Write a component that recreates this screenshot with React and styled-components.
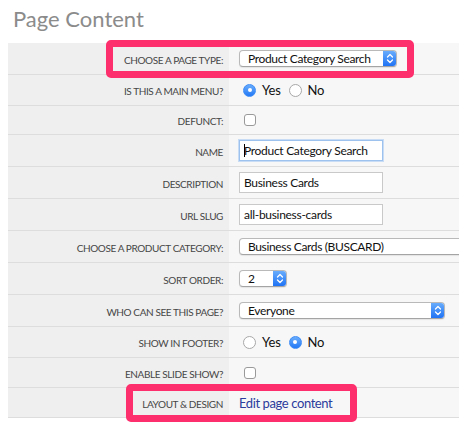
import styled, { createGlobalStyle } from "styled-components";

const GlobalStyle = createGlobalStyle`
  html, body {
    margin: 0;
    padding: 0;
    background: #ffffff;
    overflow: hidden;
  }
  body {
    font-family: Lato, "Open Sans", "Liberation Sans", sans-serif;
  }
`;

const rows = [
  { label: "Choose a page type:", h: 32, kind: "select", value: "Product Category Search", width: 158 },
  { label: "Is this a main menu?", h: 31, kind: "radio", checked: "yes" },
  { label: "Defunct:", h: 29, kind: "checkbox" },
  { label: "Name", h: 32, kind: "input", value: "Product Category Search", focused: true },
  { label: "Description", h: 32, kind: "input", value: "Business Cards" },
  { label: "URL slug", h: 32, kind: "input", value: "all-business-cards" },
  { label: "Choose a product category:", h: 32, kind: "select", value: "Business Cards (BUSCARD)", width: 280, noStepper: true },
  { label: "Sort order:", h: 32, kind: "select", value: "2", width: 48 },
  { label: "Who can see this page?", h: 32, kind: "select", value: "Everyone", width: 206 },
  { label: "Show in footer?", h: 31, kind: "radio", checked: "no" },
  { label: "Enable slide show?", h: 30, kind: "checkbox" },
  { label: "Layout & Design", h: 30, kind: "link", value: "Edit page content" },
];

function Stepper() {
  return (
    <Styled.Stepper>
      <svg width="8" height="11" viewBox="0 0 8 11" fill="none">
        <path d="M1.5 4 L4 1.5 L6.5 4" stroke="#fff" strokeWidth="1.3" strokeLinecap="round" strokeLinejoin="round" />
        <path d="M1.5 7 L4 9.5 L6.5 7" stroke="#fff" strokeWidth="1.3" strokeLinecap="round" strokeLinejoin="round" />
      </svg>
    </Styled.Stepper>
  );
}

function Control({ row }) {
  if (row.kind === "select") {
    return (
      <Styled.Select style={{ width: row.width }}>
        <Styled.SelectText>{row.value}</Styled.SelectText>
        {!row.noStepper && <Stepper />}
      </Styled.Select>
    );
  }
  if (row.kind === "radio") {
    return (
      <Styled.RadioGroup>
        <Styled.Radio $on={row.checked === "yes"} />
        <Styled.RadioLabel>Yes</Styled.RadioLabel>
        <Styled.Radio $on={row.checked === "no"} />
        <Styled.RadioLabel>No</Styled.RadioLabel>
      </Styled.RadioGroup>
    );
  }
  if (row.kind === "checkbox") {
    return <Styled.Checkbox />;
  }
  if (row.kind === "input") {
    return (
      <Styled.Input $focused={row.focused}>
        {row.focused && <Styled.Caret />}
        {row.value}
      </Styled.Input>
    );
  }
  return <Styled.Link href="#">{row.value}</Styled.Link>;
}

export default function App() {
  return (
    <Styled.Page>
      <GlobalStyle />
      <Styled.Title>Page Content</Styled.Title>
      <Styled.Table>
        {rows.map((row) => (
          <Styled.Row key={row.label} $h={row.h}>
            <Styled.Label>{row.label}</Styled.Label>
            <Styled.Value>
              <Control row={row} />
            </Styled.Value>
          </Styled.Row>
        ))}
      </Styled.Table>

      {/* annotation boxes */}
      <Styled.Highlight $left={106} $top={40} $w={308} $h={38} />
      <Styled.Highlight $left={126} $top={384} $w={231} $h={38} />
    </Styled.Page>
  );
}

const Styled = {
  Page: styled.div`
    position: relative;
    width: 459px;
    height: 430px;
    padding-left: 8px;
    box-sizing: border-box;
    overflow: hidden;
  `,

  Title: styled.h1`
    margin: 0 0 10px 5px;
    padding-top: 5px;
    font-size: 22px;
    line-height: 28px;
    font-weight: 400;
    color: #8b8b8b;
  `,

  Table: styled.div`
    width: 540px;
    display: flex;
    flex-direction: column;
  `,

  Row: styled.div`
    display: grid;
    grid-template-columns: 221px 1fr;
    height: ${({ $h }) => $h}px;
    box-sizing: border-box;
    border-bottom: 1px solid #dddddd;
  `,

  Label: styled.div`
    background: #efefef;
    display: flex;
    align-items: center;
    justify-content: flex-end;
    padding: 2px 6px 0 0;
    font-size: 10px;
    text-transform: uppercase;
    color: #464646;
    letter-spacing: -0.4px;
  `,

  Value: styled.div`
    background: #f7f7f7;
    display: flex;
    align-items: center;
    padding-left: 10px;
  `,

  Select: styled.div`
    height: 17px;
    box-sizing: border-box;
    display: flex;
    align-items: center;
    background: #ffffff;
    border: 1px solid #b9b9b9;
    border-bottom-color: #a4a4a4;
    border-radius: 4px;
    box-shadow: 0 1px 1px rgba(0, 0, 0, 0.08);
    overflow: hidden;
  `,

  SelectText: styled.span`
    flex: 1;
    padding-left: 8px;
    font-size: 12px;
    letter-spacing: -0.35px;
    color: #111111;
    white-space: nowrap;
  `,

  Stepper: styled.span`
    width: 14px;
    height: 17px;
    margin: -1px -1px -1px 0;
    display: flex;
    align-items: center;
    justify-content: center;
    background: linear-gradient(#6cb0fd, #1b6ff4);
    border-radius: 0 4px 4px 0;
  `,

  RadioGroup: styled.div`
    display: flex;
    align-items: center;
    padding-left: 4px;
  `,

  Radio: styled.span`
    width: 13px;
    height: 13px;
    box-sizing: border-box;
    border-radius: 50%;
    position: relative;
    border: 1px solid ${({ $on }) => ($on ? "#3c8cf6" : "#a8a8a8")};
    background: ${({ $on }) => ($on ? "linear-gradient(#69adfc, #2378f5)" : "#ffffff")};

    &::after {
      content: "";
      display: ${({ $on }) => ($on ? "block" : "none")};
      position: absolute;
      left: 3.5px;
      top: 3.5px;
      width: 4px;
      height: 4px;
      border-radius: 50%;
      background: #ffffff;
    }
  `,

  RadioLabel: styled.span`
    font-size: 13px;
    letter-spacing: -0.2px;
    color: #111111;
    margin: 0 8px 0 6px;
  `,

  Checkbox: styled.span`
    width: 12px;
    height: 12px;
    margin-left: 5px;
    box-sizing: border-box;
    border: 1px solid #9a9a9a;
    border-radius: 3px;
    background: #ffffff;
  `,

  Input: styled.div`
    position: relative;
    width: 144px;
    height: 21px;
    box-sizing: border-box;
    display: flex;
    align-items: center;
    padding-left: 4px;
    background: #ffffff;
    border: 1px solid ${({ $focused }) => ($focused ? "#9ec2ee" : "#c9c9c9")};
    box-shadow: ${({ $focused }) => ($focused ? "0 0 0 1px #c9dcf5" : "none")};
    font-size: 12px;
    letter-spacing: -0.3px;
    color: #111111;
    white-space: nowrap;
  `,

  Caret: styled.span`
    position: absolute;
    left: 4px;
    top: 3px;
    width: 1px;
    height: 13px;
    background: #000000;
  `,

  Link: styled.a`
    font-size: 13px;
    letter-spacing: -0.4px;
    color: #2b3c9c;
    text-decoration: none;
  `,

  Highlight: styled.div`
    position: absolute;
    left: ${({ $left }) => $left}px;
    top: ${({ $top }) => $top}px;
    width: ${({ $w }) => $w}px;
    height: ${({ $h }) => $h}px;
    box-sizing: border-box;
    border: 7px solid #fe2f6d;
    border-radius: 5px;
    pointer-events: none;
  `,
};
